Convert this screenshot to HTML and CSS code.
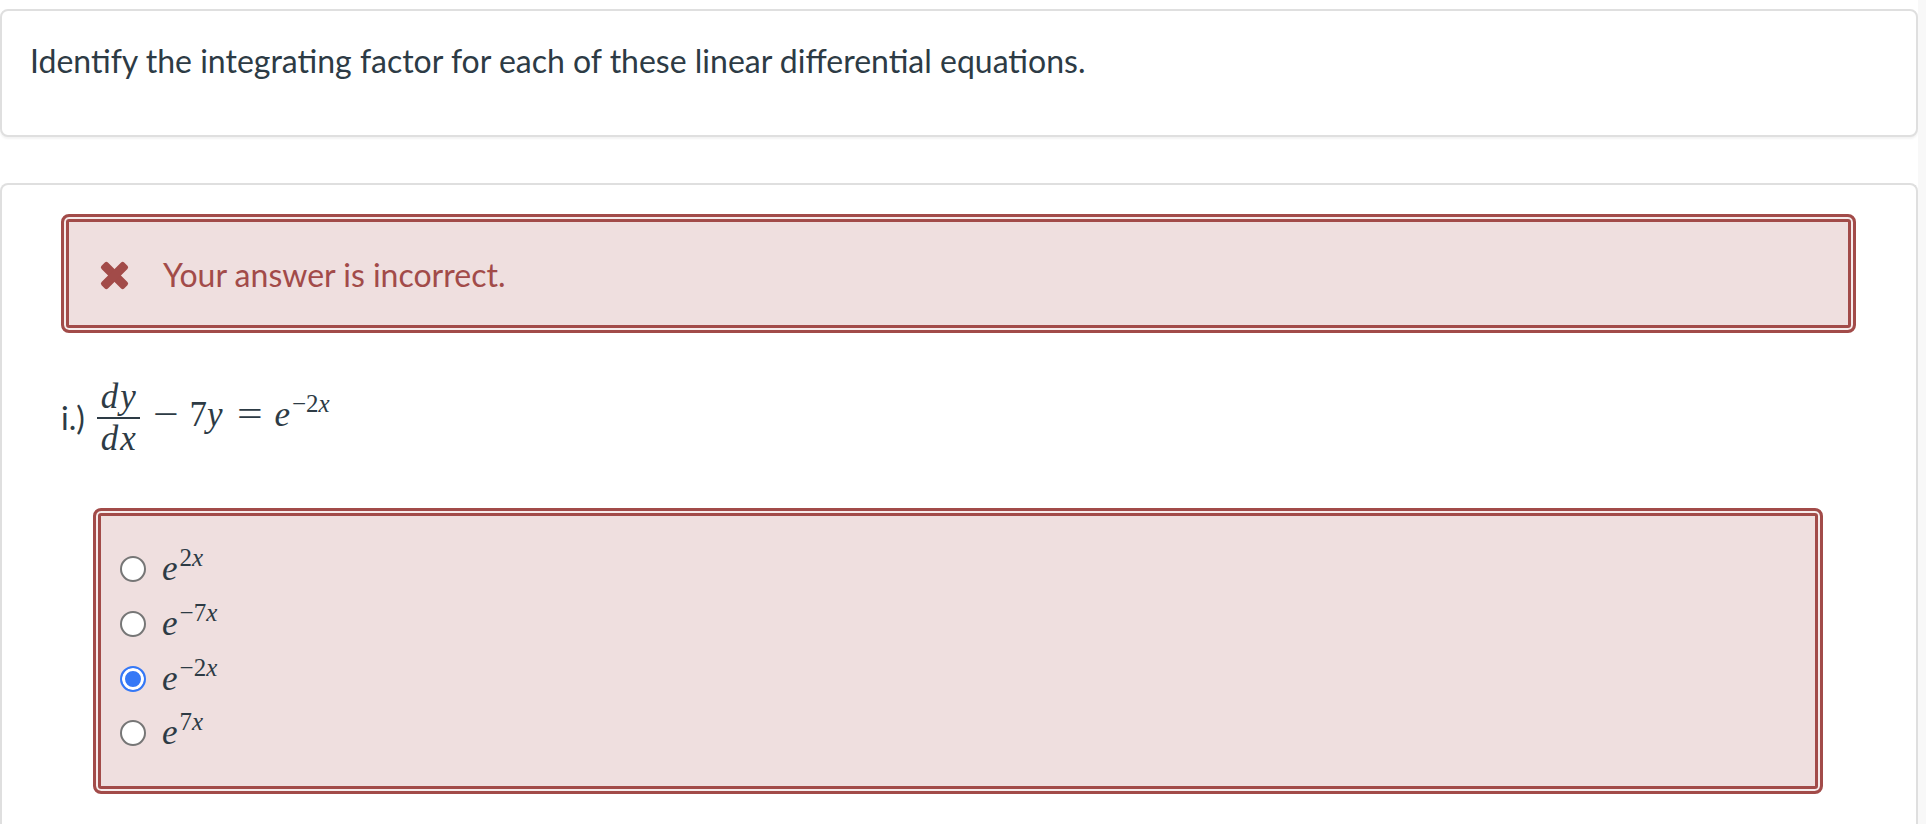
FILE: index.html
```html
<!DOCTYPE html>
<html lang="en">
<head>
    <meta charset="UTF-8">
    <title>Integrating factor</title>
    <link rel="stylesheet" href="styles.css">
</head>
<body>
<div class="page">
    <div class="main">
        <div class="card card-prompt">
            <p class="prompt">Identify the integrating factor for each of these linear differential equations.</p>
        </div>

        <div class="card card-question">
            <div class="alert">
                <svg class="alert-icon" viewBox="0 0 29 29" width="29" height="29">
                    <rect x="-1.5" y="10" width="32" height="9" rx="2.2" transform="rotate(45 14.5 14.5)"/>
                    <rect x="-1.5" y="10" width="32" height="9" rx="2.2" transform="rotate(-45 14.5 14.5)"/>
                </svg>
                <span class="alert-text">Your answer is incorrect.</span>
            </div>

            <div class="equation">
                <span class="label">i.)</span>
                <span class="math">
                    <span class="frac">
                        <span class="num"><i>d</i><i>y</i></span>
                        <span class="den"><i>d</i><i>x</i></span>
                    </span><span class="bin">−</span><span class="mn">7</span><i>y</i><span class="rel">=</span><i>e</i><sup>−2<i>x</i></sup>
                </span>
            </div>

            <div class="answers">
                <label class="answer">
                    <input type="radio" name="q1">
                    <span class="math"><i>e</i><sup>2<i>x</i></sup></span>
                </label>
                <label class="answer">
                    <input type="radio" name="q1">
                    <span class="math"><i>e</i><sup>−7<i>x</i></sup></span>
                </label>
                <label class="answer">
                    <input type="radio" name="q1" checked>
                    <span class="math"><i>e</i><sup>−2<i>x</i></sup></span>
                </label>
                <label class="answer">
                    <input type="radio" name="q1">
                    <span class="math"><i>e</i><sup>7<i>x</i></sup></span>
                </label>
            </div>
        </div>
    </div>
    <div class="gutter"></div>
</div>
</body>
</html>
```

FILE: styles.css
```css
html, body {
    margin: 0;
    height: 824px;
    overflow: hidden;
    background: #fff;
}
body {
    color: #2d3b45;
    font-family: Lato, "Noto Sans", sans-serif;
    font-size: 32px;
}
.page {
    display: flex;
    height: 824px;
}
.main {
    width: 1918px;
    height: 824px;
    display: flex;
    flex-direction: column;
}
.gutter {
    flex: 1;
    background: #f8f8f8;
}
.card {
    border: 2px solid #dfdfdf;
    border-radius: 8px;
    background: #fff;
}
.card-prompt {
    margin-top: 9px;
    box-sizing: border-box;
    height: 128px;
    flex: none;
    padding: 31px 28px 0;
    box-shadow: 0 2px 2px rgba(0, 0, 0, 0.05);
}
.prompt {
    margin: 0;
    line-height: 1.2;
}
.card-question {
    flex: 1;
    min-height: 0;
    margin-top: 46px;
    padding: 29px 60px 0 59px;
    border-bottom: none;
    border-radius: 8px 8px 0 0;
}
.alert {
    display: flex;
    align-items: center;
    box-sizing: border-box;
    height: 119px;
    padding: 4px 0 0 36px;
    border: 3px solid #a24b49;
    border-radius: 8px;
    background: #efdfdf;
    box-shadow: inset 0 0 0 2px #f6ebeb, inset 0 0 0 5px #a24b49;
    color: #a24b49;
}
.alert-icon {
    fill: #a24b49;
    margin-right: 34px;
}
.alert-text {
    line-height: 1.2;
}
.equation {
    margin-top: 46px;
    display: flex;
    align-items: center;
}
.label {
    margin-right: 12px;
}
.math {
    font-family: "Liberation Serif", "DejaVu Serif", serif;
    font-size: 35px;
    white-space: nowrap;
}
.math i {
    font-style: italic;
}
.math sup {
    font-size: 25px;
    vertical-align: 14px;
    line-height: 0;
    margin-left: 2px;
}
.frac {
    display: inline-flex;
    flex-direction: column;
    align-items: center;
    vertical-align: middle;
    line-height: 1;
}
.frac i {
    margin: 0 1px;
}
.num {
    padding: 0 3px 3px;
    border-bottom: 2px solid #2d3b45;
}
.den {
    padding: 2px 3px 0;
}
.bin,
.rel {
    display: inline-block;
    transform: scaleX(1.3);
}
.bin {
    margin: 0 14px 0 16px;
}
.rel {
    margin: 0 15px 0 17px;
}
.answers {
    margin: 52px 33px 0 32px;
    padding: 31px 24px 30px;
    border: 3px solid #a24b49;
    border-radius: 8px;
    background: #efdfdf;
    box-shadow: inset 0 0 0 2px #f6ebeb, inset 0 0 0 5px #a24b49;
}
.answer {
    display: flex;
    align-items: center;
    height: 54.7px;
}
.answer input {
    appearance: none;
    -webkit-appearance: none;
    width: 26px;
    height: 26px;
    margin: 0 16px 0 0;
    border: 2px solid #767676;
    border-radius: 50%;
    background: #fff;
    box-sizing: border-box;
}
.answer input:checked {
    border-color: #3578f6;
    background: #3578f6;
    box-shadow: inset 0 0 0 3px #fff;
}
```
